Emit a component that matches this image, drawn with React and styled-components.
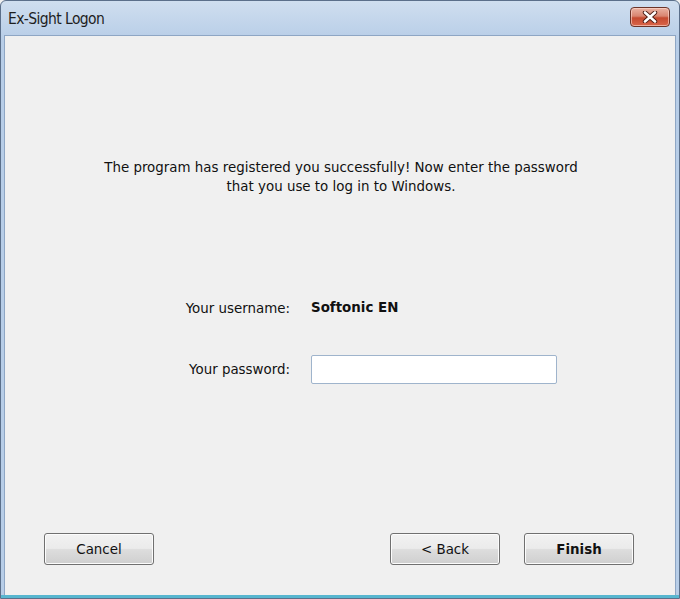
import React from 'react';
import styled, { createGlobalStyle } from 'styled-components';

const GlobalStyle = createGlobalStyle`
  html, body {
    margin: 0;
    padding: 0;
    background: #f0f0f0;
  }
  body {
    font-family: "Liberation Sans", Arial, sans-serif;
  }
`;

export default function App() {
  return (
    <>
      <GlobalStyle />
      <Window>
        <TitleBar>
          <Title>Ex-Sight Logon</Title>
          <CloseButton aria-label="Close">
            <svg width="16" height="12" viewBox="0 0 16 12">
              <path d="M3 1.5 L13 10.5 M13 1.5 L3 10.5" stroke="#4a1a12" strokeWidth="4.4" strokeLinecap="round" />
              <path d="M3 1.5 L13 10.5 M13 1.5 L3 10.5" stroke="#fff" strokeWidth="2.6" strokeLinecap="round" />
            </svg>
          </CloseButton>
        </TitleBar>
        <Client>
          <Message>
            The program has registered you successfully! Now enter the password
            <br />
            that you use to log in to Windows.
          </Message>
          <Form>
            <Label>Your username:</Label>
            <Value>Softonic EN</Value>
            <Label>Your password:</Label>
            <PasswordInput type="password" />
          </Form>
          <ButtonRow>
            <Button>Cancel</Button>
            <Spacer />
            <Button>&lt; Back</Button>
            <Button $primary>Finish</Button>
          </ButtonRow>
        </Client>
      </Window>
    </>
  );
}

const Window = styled.div`
  width: 680px;
  height: 599px;
  box-sizing: border-box;
  display: flex;
  flex-direction: column;
  background: linear-gradient(#cfdeef, #b7cde7 40px, #b7cde7);
  border: 1px solid #5b6f8a;
  border-radius: 6px 6px 0 0;
  padding: 0 3px 3px 3px;
  box-shadow: inset 0 -3px 0 #57b6cf;
`;

const TitleBar = styled.div`
  height: 34px;
  display: flex;
  align-items: center;
  justify-content: space-between;
  padding: 0 6px 0 4px;
  flex-shrink: 0;
`;

const Title = styled.div`
  font-family: "DejaVu Sans Condensed", "Liberation Sans Narrow", sans-serif;
  font-size: 15.5px;
  letter-spacing: -0.6px;
  color: #1e1e1e;
  padding-top: 1px;
`;

const CloseButton = styled.div`
  width: 40px;
  height: 20px;
  box-sizing: border-box;
  margin-top: -2px;
  border: 1px solid #6b3328;
  border-radius: 4px;
  background: linear-gradient(#eab2a2 0%, #d98570 45%, #c54a30 55%, #d9664a 100%);
  box-shadow: inset 0 0 0 1px rgba(255, 220, 210, 0.6);
  display: flex;
  align-items: center;
  justify-content: center;
`;

const Client = styled.div`
  flex: 1;
  display: flex;
  flex-direction: column;
  background: #f0f0f0;
  border: 1px solid #8ea6c4;
  border-bottom: none;
  padding: 122px 0 30px 0;
`;

const Message = styled.div`
  text-align: center;
  font-family: "DejaVu Sans", sans-serif;
  font-size: 13.4px;
  line-height: 19px;
  color: #111;
  margin-left: 2px;
`;

const Form = styled.div`
  display: grid;
  grid-template-columns: 285px 246px;
  column-gap: 21px;
  row-gap: 35px;
  align-items: center;
  margin-top: 100px;
`;

const Label = styled.div`
  text-align: right;
  font-family: "DejaVu Sans", sans-serif;
  font-size: 13.4px;
  color: #111;
`;

const Value = styled.div`
  font-family: "DejaVu Sans", sans-serif;
  font-size: 13.4px;
  font-weight: bold;
  color: #111;
  height: 24px;
  line-height: 24px;
`;

const PasswordInput = styled.input`
  box-sizing: border-box;
  width: 246px;
  height: 29px;
  border: 1px solid #9fb4cc;
  border-radius: 2px;
  background: #fff;
  outline: none;
`;

const ButtonRow = styled.div`
  margin-top: auto;
  display: flex;
  align-items: center;
  gap: 24px;
  padding: 0 41px 0 39px;
`;

const Spacer = styled.div`
  flex: 1;
`;

const Button = styled.button`
  width: 110px;
  height: 32px;
  box-sizing: border-box;
  border: 1px solid #707070;
  border-radius: 3px;
  background: linear-gradient(#f2f2f2 0%, #ebebeb 48%, #dddddd 52%, #cfcfcf 100%);
  box-shadow: inset 0 0 0 1px #fcfcfc;
  font-family: "DejaVu Sans", sans-serif;
  font-size: 13.4px;
  font-weight: ${(p) => (p.$primary ? 'bold' : 'normal')};
  color: #111;
  padding: 0;
`;
